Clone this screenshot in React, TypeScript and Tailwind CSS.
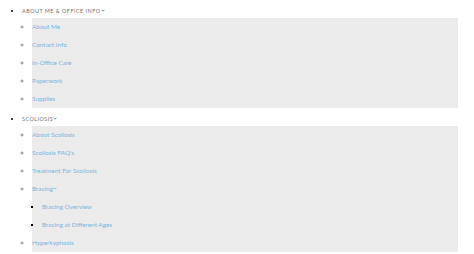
import * as React from "react";

type Item = { label: string; children?: string[] };

const MENUS: { title: string; items: Item[] }[] = [
  {
    title: "About Me & Office Info",
    items: [
      { label: "About Me" },
      { label: "Contact Info" },
      { label: "In-Office Care" },
      { label: "Paperwork" },
      { label: "Supplies" },
    ],
  },
  {
    title: "Scoliosis",
    items: [
      { label: "About Scoliosis" },
      { label: "Scoliosis FAQ's" },
      { label: "Treatment For Scoliosis" },
      { label: "Bracing", children: ["Bracing Overview", "Bracing at Different Ages"] },
      { label: "Hyperkyphosis" },
    ],
  },
];

function Chevron() {
  return (
    <svg width="4" height="3" viewBox="0 0 4 3" className="inline-block align-[1px]">
      <path d="M0.5 0.7 L2 2.2 L3.5 0.7" fill="none" stroke="currentColor" strokeWidth="0.8" />
    </svg>
  );
}

export default function App() {
  return (
    <div className="w-[474px] h-[254px] overflow-hidden bg-white pr-[16px] font-['Lato',sans-serif]">
      <ul className="[list-style-type:disc] pl-[22px]">
        {MENUS.map((menu) => (
          <li key={menu.title} className="text-[#6f6f6f] [&::marker]:text-black [&::marker]:text-[7px]">
            <span className="block h-[18px] pt-[2px] leading-[18px] text-[5.4px] uppercase tracking-[0.5px]">
              {menu.title}
              <Chevron />
            </span>
            <ul className="ml-[10px] [list-style-type:circle] bg-[#ebebeb]">
              {menu.items.map((item) => (
                <li
                  key={item.label}
                  className="text-[#7ab6de] text-[6.4px] [&::marker]:text-[#8a8a8a] [&::marker]:text-[7px]"
                >
                  <span className="block h-[18px] leading-[18px]">
                    {item.label}
                    {item.children && <Chevron />}
                  </span>
                  {item.children && (
                    <ul className="[list-style-type:square] pl-[10px]">
                      {item.children.map((c) => (
                        <li key={c} className="[&::marker]:text-black [&::marker]:text-[6px]">
                          <span className="block h-[18px] leading-[18px]">{c}</span>
                        </li>
                      ))}
                    </ul>
                  )}
                </li>
              ))}
            </ul>
          </li>
        ))}
      </ul>
    </div>
  );
}
